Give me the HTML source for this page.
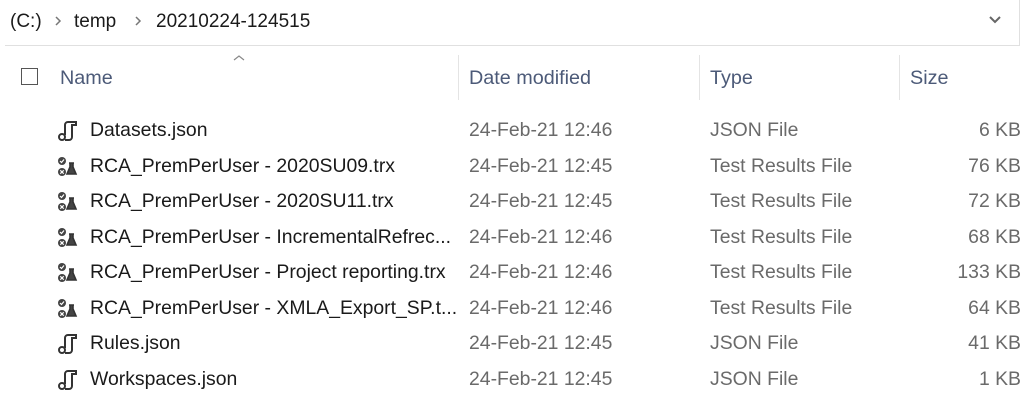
<!DOCTYPE html>
<html><head><style>
body{margin:0;width:1024px;height:401px;background:#fff;font-family:"Segoe UI","Liberation Sans",sans-serif;overflow:hidden;position:relative}
.t{position:absolute;white-space:nowrap;font-size:19.4px;line-height:22px}
.bc{top:11px;color:#1a1a1a;font-size:19px}
.hd{top:67px;color:#4c5a78;font-size:19.8px}
.r{color:#1a1a1a}
.g{color:#6a6a6a}
.sz{text-align:right;width:100px}
.vl{position:absolute;top:55px;height:45px;width:1px;background:#e4e4e4}
</style></head><body>
<div style="position:absolute;left:5px;top:45px;width:1014px;height:1px;background:#e0e0e0"></div>
<div style="position:absolute;left:1019px;top:0;width:1px;height:46px;background:#e0e0e0"></div>
<div class="t bc" style="left:10px">(C:)</div>
<svg style="position:absolute;left:54px;top:15px" width="8" height="12"><path d="M2 2l4 4-4 4" stroke="#777" stroke-width="1.5" fill="none"/></svg>
<div class="t bc" style="left:74px">temp</div>
<svg style="position:absolute;left:134px;top:15px" width="8" height="12"><path d="M2 2l4 4-4 4" stroke="#777" stroke-width="1.5" fill="none"/></svg>
<div class="t bc" style="left:156px">20210224-124515</div>
<svg style="position:absolute;left:988px;top:15px" width="14" height="10"><path d="M2 2l5 5 5-5" stroke="#666" stroke-width="2" fill="none"/></svg>
<svg style="position:absolute;left:232px;top:54px" width="14" height="8"><path d="M2 6l5-4 5 4" stroke="#888" stroke-width="1.2" fill="none"/></svg>
<div style="position:absolute;left:21px;top:68px;width:17px;height:17px;border:1.5px solid #555;box-sizing:border-box"></div>
<div class="t hd" style="left:60px">Name</div>
<div class="vl" style="left:458px"></div>
<div class="t hd" style="left:469px">Date modified</div>
<div class="vl" style="left:699px"></div>
<div class="t hd" style="left:710px">Type</div>
<div class="vl" style="left:899px"></div>
<div class="t hd" style="left:910px">Size</div>
<div id="rows"></div>
<script>
var d=[["j","Datasets.json","24-Feb-21 12:46","JSON File","6 KB"],
["t","RCA_PremPerUser - 2020SU09.trx","24-Feb-21 12:45","Test Results File","76 KB"],
["t","RCA_PremPerUser - 2020SU11.trx","24-Feb-21 12:45","Test Results File","72 KB"],
["t","RCA_PremPerUser - IncrementalRefrec...","24-Feb-21 12:46","Test Results File","68 KB"],
["t","RCA_PremPerUser - Project reporting.trx","24-Feb-21 12:46","Test Results File","133 KB"],
["t","RCA_PremPerUser - XMLA_Export_SP.t...","24-Feb-21 12:46","Test Results File","64 KB"],
["j","Rules.json","24-Feb-21 12:45","JSON File","41 KB"],
["j","Workspaces.json","24-Feb-21 12:45","JSON File","1 KB"]];
var h="";
d.forEach(function(r,i){var y=119+i*35.5;
var ic=r[0]=="j"?'<svg style="position:absolute;left:57px;top:'+(y+1)+'px" width="22" height="22"><path d="M8 15V5a3 3 0 0 1 3-3h8v3h-4v12a3 3 0 0 1-3 3H8" stroke="#333" stroke-width="2" fill="none"/><circle cx="5" cy="17" r="3" stroke="#333" stroke-width="2" fill="none"/></svg>'
:'<svg style="position:absolute;left:57px;top:'+(y+1)+'px" width="22" height="22"><circle cx="5" cy="5" r="4" fill="#444"/><path d="M3 5l1.5 1.5L7 3.5" stroke="#fff" stroke-width="1.2" fill="none"/><circle cx="5" cy="16" r="4" fill="#444"/><path d="M3.3 14.3l3.4 3.4M6.7 14.3l-3.4 3.4" stroke="#fff" stroke-width="1.2"/><path d="M12 7h5M13 7v4l-3 7h9l-3-7V7" stroke="#333" stroke-width="1.6" fill="#444"/></svg>';
h+=ic+'<div class="t r" style="left:90px;top:'+y+'px">'+r[1]+'</div><div class="t g" style="left:469px;top:'+y+'px">'+r[2]+'</div><div class="t g" style="left:710px;top:'+y+'px">'+r[3]+'</div><div class="t g sz" style="left:921px;top:'+y+'px">'+r[4]+'</div>';});
document.getElementById("rows").innerHTML=h;
</script>
</body></html>
